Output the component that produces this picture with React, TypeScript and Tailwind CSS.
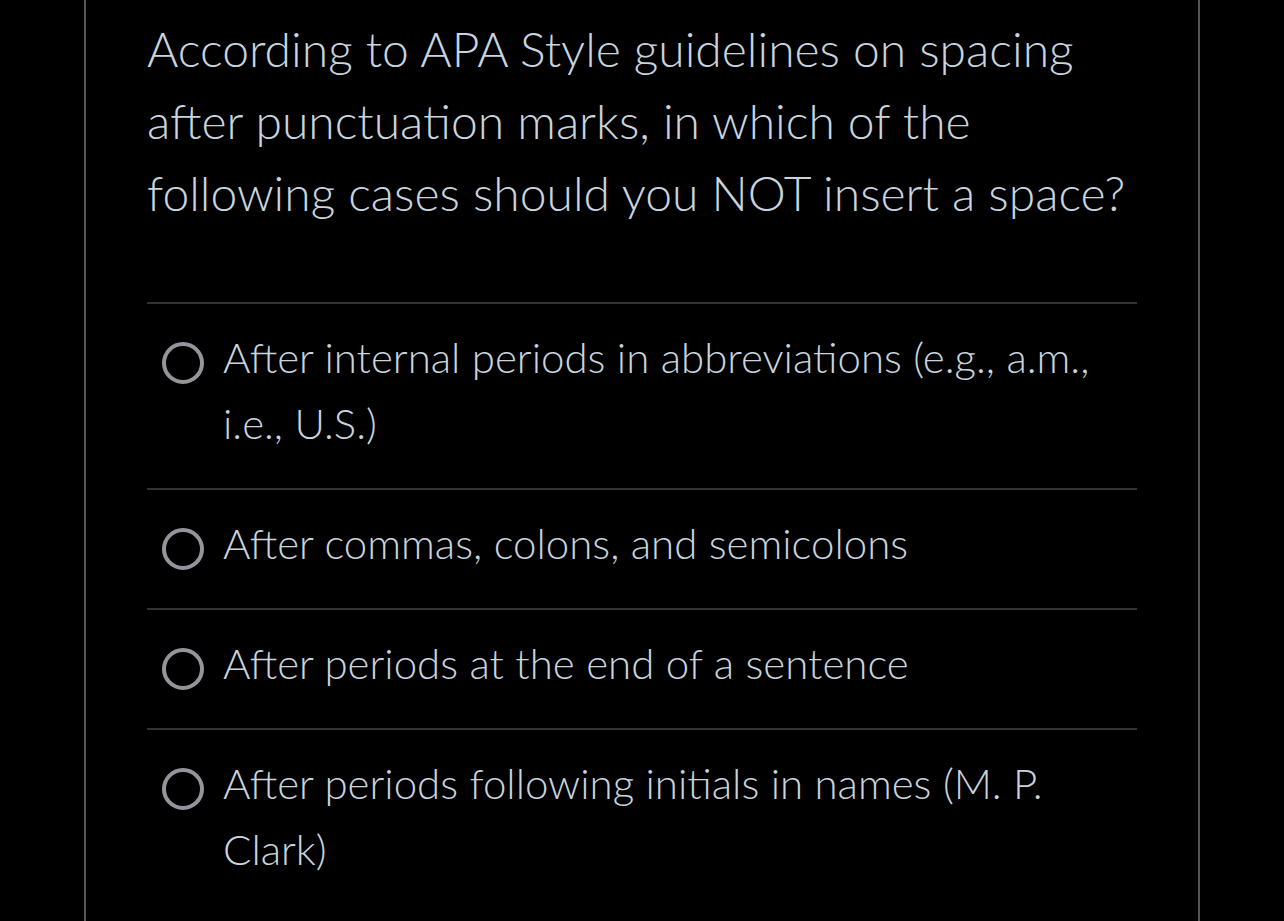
const options = [
  'After internal periods in abbreviations (e.g., a.m., i.e., U.S.)',
  'After commas, colons, and semicolons',
  'After periods at the end of a sentence',
  'After periods following initials in names (M. P. Clark)',
];

export default function App() {
  return (
    <div className="min-h-screen h-[921px] overflow-hidden bg-black" style={{ fontFamily: '"Lato Light", Lato, "Noto Sans", sans-serif' }}>
      <div className="ml-[84px] w-[1116px] h-full border-x-2 border-[#555555] px-[61px] pt-[13px]">
        <h1 className="text-[48px] leading-[72px] font-light text-[#c9d4de]">
          According to APA Style guidelines on spacing after punctuation marks, in which of the following cases should you NOT insert a space?
        </h1>
        <div className="mt-[73px] border-t-2 border-[#333333] divide-y-2 divide-[#333333]">
          {options.map((text, i) => (
            <div key={i} className="flex items-start gap-[19px] pl-[15px] pr-4 pt-[20px] pb-[32px]">
              <span className="block shrink-0 mt-[18px] w-[42px] h-[42px] rounded-full border-4 border-[#96939a]" />
              <span className="text-[42px] leading-[66px] font-light text-[#c9d4de]">{text}</span>
            </div>
          ))}
        </div>
      </div>
    </div>
  );
}
